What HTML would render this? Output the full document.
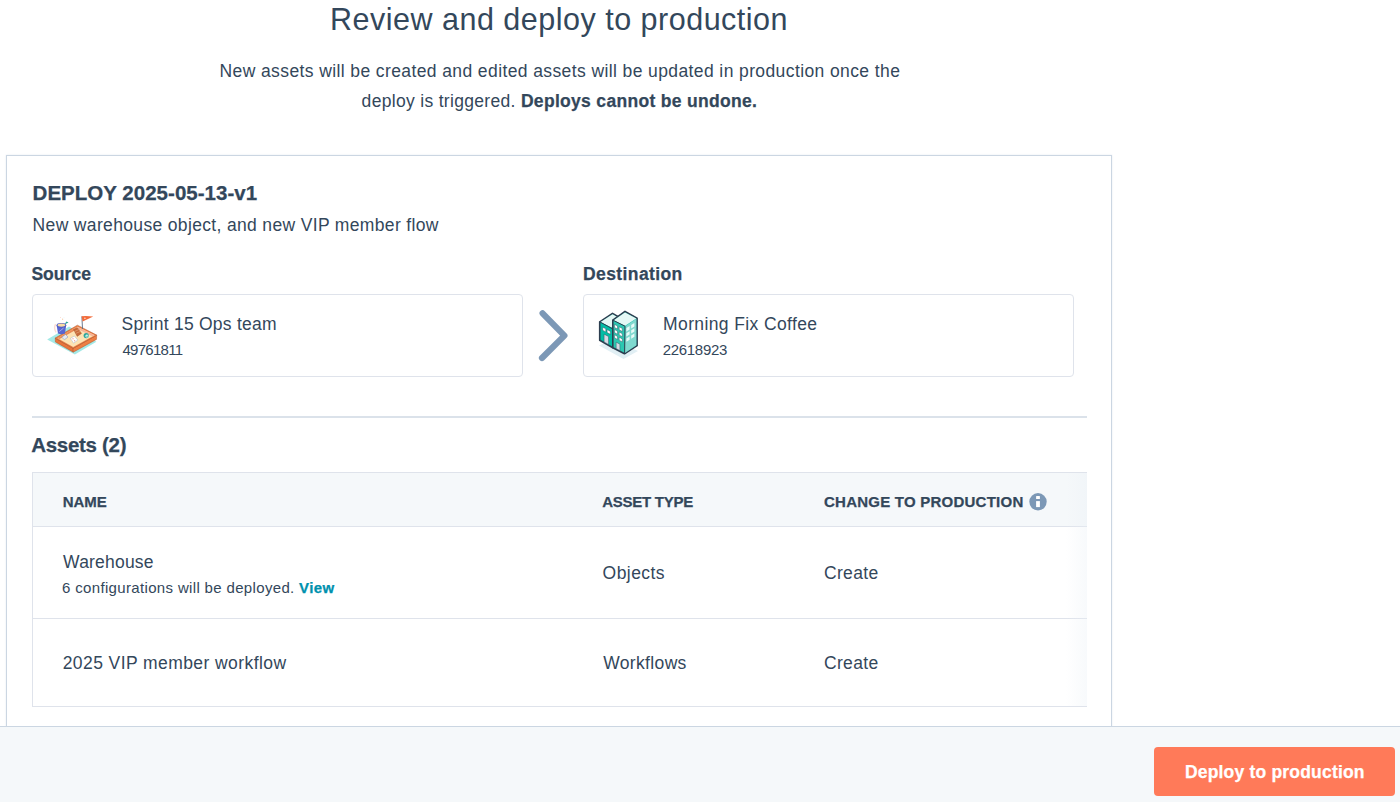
<!DOCTYPE html>
<html><head><meta charset="utf-8"><title>Review and deploy to production</title>
<style>
html,body{margin:0;padding:0}
body{width:1400px;height:802px;overflow:hidden;position:relative;background:#fff;font-family:"Liberation Sans",sans-serif;color:#33475b}
.t{position:absolute;white-space:nowrap;line-height:1}
.t b,.bold{-webkit-text-stroke:0.25px currentColor}
.abs{position:absolute;box-sizing:border-box}
</style></head><body>
<div class="abs" id="card" style="left:6px;top:155px;width:1106px;height:700px;border:1px solid #cbd6e2;background:#fff;box-shadow:0 0 1.5px rgba(203,214,226,0.6)"></div>
<div class="abs" id="divider" style="left:32px;top:416px;width:1055px;height:2px;background:#dbe2ea"></div>
<div class="abs" id="srcbox" style="left:32px;top:294px;width:491px;height:83px;border:1px solid #dfe3eb;border-radius:4px"></div>
<div class="abs" id="dstbox" style="left:583px;top:294px;width:491px;height:83px;border:1px solid #dfe3eb;border-radius:4px"></div>
<svg class="abs" style="left:530px;top:300px" width="50" height="70" viewBox="530 300 50 70"><polyline points="542.6,313.3 564.4,335.6 542,358" fill="none" stroke="#7c98b6" stroke-width="6.2" stroke-linecap="round" stroke-linejoin="round"/></svg>
<div class="abs" id="table" style="left:32px;top:472px;width:1055px;height:235px;border:1px solid #dfe3eb;border-right:none"></div>
<div class="abs" id="thead" style="left:33px;top:473px;width:1054px;height:54px;background:#f5f8fa;border-bottom:1px solid #dfe3eb"></div>
<div class="abs" id="row1b" style="left:33px;top:618px;width:1054px;height:1px;background:#dfe3eb"></div>
<div class="abs" id="shadow" style="left:1066px;top:473px;width:21px;height:233px;background:linear-gradient(to right,rgba(234,240,246,0),rgba(234,240,246,0.35))"></div>
<svg class="abs" style="left:1029px;top:493px" width="18" height="18" viewBox="0 0 18 18"><circle cx="9" cy="8.8" r="8.7" fill="#7c98b6"/><rect x="7.1" y="3.1" width="3.8" height="3" rx="0.3" fill="#fff"/><rect x="7.1" y="8.1" width="3.8" height="6" fill="#fff"/></svg>
<div class="abs" id="footer" style="left:0;top:726px;width:1400px;height:76px;background:#f5f8fa;border-top:1px solid #cbd6e2"></div>
<div class="abs" id="btn" style="left:1154px;top:747px;width:241px;height:49px;background:#ff7a59;border-radius:4px"></div>
<svg class="abs" style="left:46px;top:312px" width="54" height="46" viewBox="0 0 54 46">
 <polygon points="1.2,27.6 23,14.6 50.4,29.8 28.9,42.6" fill="#a3e9e6"/>
 <polygon points="9.2,26.1 27.2,36.3 27.2,40.2 9.4,30" fill="#e8743b" stroke="#a9512a" stroke-width="0.45"/>
 <polygon points="27.2,36.3 50.7,23.1 50.5,27.4 27.2,40.2" fill="#ee7f43" stroke="#a9512a" stroke-width="0.45"/>
 <polygon points="9.2,26.1 31.4,13.2 50.7,23.1 27.2,36.3" fill="#f08247" stroke="#a9512a" stroke-width="0.5"/>
 <polygon points="11.6,26.2 31.4,14.8 48.6,23.2 27.2,34.9" fill="#fde3b4"/>
 <polygon points="11.6,26.2 31.4,14.8 31.4,16.9 13.6,27.1" fill="#e98a55"/>
 <polygon points="31.4,14.8 48.6,23.2 46.4,24.2 31.4,16.9" fill="#f6b398"/>
 <polygon points="27.5,17.6 31.5,15.9 35.6,21.4 31.2,24.4" fill="#c86a3a" stroke="#9a4e2a" stroke-width="0.35"/>
 <line x1="28.7" y1="19.4" x2="32.8" y2="17.6" stroke="#f1c9a0" stroke-width="0.45"/>
 <line x1="30" y1="21.3" x2="34.1" y2="19.5" stroke="#f1c9a0" stroke-width="0.45"/>
 <polygon points="24.4,26.4 28.3,24 31.8,28 27.6,31.2" fill="#ffffff" stroke="#9fb2c8" stroke-width="0.45"/>
 <circle cx="27" cy="26.8" r="0.7" fill="#f3a6a0"/><circle cx="28.6" cy="28.8" r="0.7" fill="#f3a6a0"/>
 <polygon points="15.8,25.2 19.4,22.4 22,25 18.4,27.8" fill="#e3eaf4" stroke="#7c8fb0" stroke-width="0.5"/>
 <circle cx="40.2" cy="23.6" r="2.6" fill="#2aa59a"/>
 <circle cx="40.9" cy="24" r="1.5" fill="#e5f7f5"/>
 <circle cx="41.1" cy="24.2" r="0.7" fill="#1fb5a0"/>
 <line x1="35.9" y1="4.4" x2="36.5" y2="17" stroke="#5a6b82" stroke-width="0.9"/>
 <path d="M35.6,4.2 Q41,3.6 47.2,4.6 Q41.5,7.4 36.6,9.6 Z" fill="#f26b3a"/>
 <circle cx="38.9" cy="6.3" r="0.8" fill="#fde0d4"/>
 <path d="M10.6,13.2 L20.2,13.2 L19,21.4 Q15.5,23 12,21.4 Z" fill="#5866d1"/>
 <ellipse cx="15.4" cy="13.2" rx="4.8" ry="2.3" fill="#4b59c4"/>
 <ellipse cx="15.4" cy="13.1" rx="3.9" ry="1.6" fill="#f8dba3"/>
 <line x1="13.3" y1="19.6" x2="17.6" y2="16" stroke="#dfe3f8" stroke-width="0.55"/>
 <path d="M18.4,12.6 L20.4,9.4 L22.6,10.6 Z" fill="#2aa59a"/>
 <circle cx="16.6" cy="7.2" r="0.6" fill="#f8c9a0"/><circle cx="14.6" cy="5.6" r="0.45" fill="#f8b0a0"/><circle cx="18" cy="5.8" r="0.4" fill="#bfe3ef"/>
 <path d="M9.6,12.2 Q7.4,16 10,20.4" stroke="#fcdcd2" stroke-width="1.4" fill="none"/>
</svg>
<svg class="abs" style="left:596px;top:308px" width="48" height="54" viewBox="0 0 48 54">
 <polygon points="3,37.5 17,31 42,43 27.5,51" fill="#e1eff4"/>
 <polygon points="3.7,13.8 16.5,5.4 24,9.8 16.8,14.5 16.8,39.7 3.7,32.3" fill="#00bda5" stroke="#2d3e50" stroke-width="1.6" stroke-linejoin="round"/>
 <polygon points="4.6,14 16.5,6.3 22.5,9.8 15.5,19.5" fill="#e5f8f5"/>
 <line x1="3.7" y1="13.8" x2="16" y2="20.6" stroke="#2d3e50" stroke-width="1"/>
 <polygon points="6.7,19.2 9.8,20.8 9.8,23.9 6.7,22.3" fill="#fff" stroke="#2d3e50" stroke-width="0.4"/>
 <polygon points="11.1,21.6 14.4,23.4 14.4,26.3 11.1,24.6" fill="#fff" stroke="#2d3e50" stroke-width="0.4"/>
 <polygon points="8.1,26.2 12.5,28.6 12.5,36.4 8.1,34" fill="#d4d9e4" stroke="#2d3e50" stroke-width="0.4"/>
 <polygon points="16.8,12.1 29,3.4 41.1,10.1 41.1,37.7 28.5,45.8 16.8,39.7" fill="#2cc7b1" stroke="#2d3e50" stroke-width="1.6" stroke-linejoin="round"/>
 <polygon points="17.8,12.3 29,4.4 40.3,10.4 29,17.8" fill="#e5f8f5"/>
 <polygon points="29.1,18.5 40.4,10.8 40.4,37.3 28.9,44.9" fill="#80d9cf"/>
 <polyline points="16.8,12.1 29,18.2 28.6,45.6" fill="none" stroke="#2d3e50" stroke-width="1"/>
 <g fill="#fff" stroke="#2d3e50" stroke-width="0.4">
  <polygon points="18.5,16.4 21.5,18 21.5,21 18.5,19.4"/>
  <polygon points="23.2,18.8 26.3,20.5 26.3,23.5 23.2,21.8"/>
  <polygon points="18.5,21.6 21.5,23.2 21.5,26.2 18.5,24.6"/>
  <polygon points="23.2,24 26.3,25.7 26.3,28.7 23.2,27"/>
  <polygon points="18.5,26.8 21.5,28.4 21.5,31.4 18.5,29.8"/>
  <polygon points="23.2,29.2 26.3,30.9 26.3,33.9 23.2,32.2"/>
 </g>
 <polygon points="20.2,34.2 23.9,36.2 23.9,42.6 20.2,40.6" fill="#d4d9e4" stroke="#2d3e50" stroke-width="0.4"/>
 <g fill="#e8faf7">
  <polygon points="30.4,20 33.6,18 33.6,21.4 30.4,23.4"/>
  <polygon points="35.2,17 38.4,15 38.4,18.4 35.2,20.4"/>
  <polygon points="30.4,25.2 33.6,23.2 33.6,26.6 30.4,28.6"/>
  <polygon points="35.2,22.2 38.4,20.2 38.4,23.6 35.2,25.6"/>
  <polygon points="30.4,30.4 33.6,28.4 33.6,31.8 30.4,33.8"/>
  <polygon points="35.2,27.4 38.4,25.4 38.4,28.8 35.2,30.8"/>
 </g>
</svg>

<div class="t" id="title" style="left:330.0px;top:4.0px;font-size:30.5px;font-weight:400;letter-spacing:0.5px;color:#33475b">Review and deploy to production</div>
<div class="t" id="sub1" style="left:219.5px;top:63.0px;font-size:17.5px;font-weight:400;letter-spacing:0.396px;color:#33475b">New assets will be created and edited assets will be updated in production once the</div>
<div class="t" id="sub2" style="left:361.6px;top:92.7px;font-size:17.5px;font-weight:400;letter-spacing:0.313px;color:#33475b">deploy is triggered. <b>Deploys cannot be undone.</b></div>
<div class="t bold" id="deploy" style="left:32.6px;top:183.0px;font-size:20.5px;font-weight:700;letter-spacing:0.021px;color:#33475b">DEPLOY 2025-05-13-v1</div>
<div class="t" id="desc" style="left:32.6px;top:216.8px;font-size:17.5px;font-weight:400;letter-spacing:0.344px;color:#33475b">New warehouse object, and new VIP member flow</div>
<div class="t bold" id="source" style="left:31.4px;top:266.0px;font-size:17.5px;font-weight:700;letter-spacing:0.06px;color:#33475b">Source</div>
<div class="t bold" id="dest" style="left:583.0px;top:266.0px;font-size:17.5px;font-weight:700;letter-spacing:0.4px;color:#33475b">Destination</div>
<div class="t" id="sprint" style="left:121.5px;top:316.3px;font-size:17.5px;font-weight:400;letter-spacing:0.259px;color:#33475b">Sprint 15 Ops team</div>
<div class="t" id="sid" style="left:122.5px;top:342.2px;font-size:15px;font-weight:400;letter-spacing:-0.729px;color:#33475b">49761811</div>
<div class="t" id="morning" style="left:663.1px;top:316.3px;font-size:17.5px;font-weight:400;letter-spacing:0.376px;color:#33475b">Morning Fix Coffee</div>
<div class="t" id="did" style="left:662.7px;top:342.2px;font-size:15px;font-weight:400;letter-spacing:-0.3px;color:#33475b">22618923</div>
<div class="t bold" id="assets" style="left:31.2px;top:435.0px;font-size:20.5px;font-weight:700;letter-spacing:-0.3px;color:#33475b">Assets (2)</div>
<div class="t bold" id="hname" style="left:62.8px;top:494.0px;font-size:15px;font-weight:700;letter-spacing:-0.1px;color:#33475b">NAME</div>
<div class="t bold" id="htype" style="left:602.2px;top:494.0px;font-size:15px;font-weight:700;letter-spacing:-0.267px;color:#33475b">ASSET TYPE</div>
<div class="t bold" id="hchange" style="left:824.0px;top:494.0px;font-size:15px;font-weight:700;letter-spacing:0.237px;color:#33475b">CHANGE TO PRODUCTION</div>
<div class="t" id="wh" style="left:63.1px;top:553.5px;font-size:17.5px;font-weight:400;letter-spacing:0.2px;color:#33475b">Warehouse</div>
<div class="t" id="cfg" style="left:62.0px;top:579.5px;font-size:15px;font-weight:400;letter-spacing:0.342px;color:#33475b">6 configurations will be deployed. <b style='color:#0091ae'>View</b></div>
<div class="t" id="objects" style="left:602.6px;top:564.9px;font-size:17.5px;font-weight:400;letter-spacing:0.45px;color:#33475b">Objects</div>
<div class="t" id="create1" style="left:824.0px;top:564.7px;font-size:17.5px;font-weight:400;letter-spacing:0.32px;color:#33475b">Create</div>
<div class="t" id="vip" style="left:62.7px;top:654.9px;font-size:17.5px;font-weight:400;letter-spacing:0.422px;color:#33475b">2025 VIP member workflow</div>
<div class="t" id="workflows" style="left:603.2px;top:654.9px;font-size:17.5px;font-weight:400;letter-spacing:0.35px;color:#33475b">Workflows</div>
<div class="t" id="create2" style="left:824.0px;top:654.9px;font-size:17.5px;font-weight:400;letter-spacing:0.32px;color:#33475b">Create</div>
<div class="t bold" id="btn" style="left:1184.9px;top:763.6px;font-size:17.5px;font-weight:700;letter-spacing:0.195px;color:#ffffff">Deploy to production</div>
</body></html>
